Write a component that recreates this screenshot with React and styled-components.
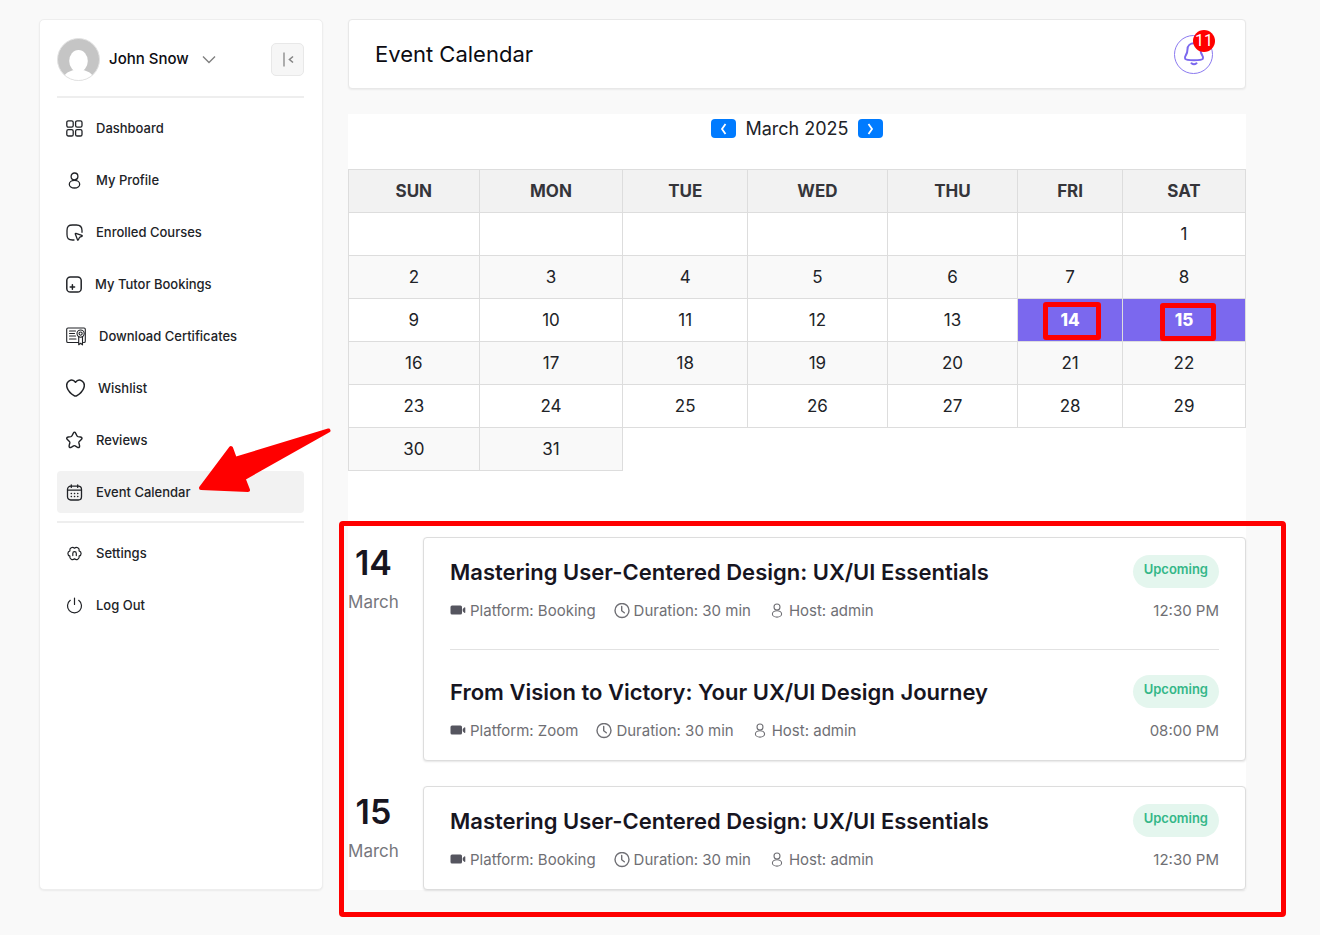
import React from "react";
import styled, { createGlobalStyle } from "styled-components";

const weekDays = ["SUN", "MON", "TUE", "WED", "THU", "FRI", "SAT"];

const weeks = [
  ["", "", "", "", "", "", 1],
  [2, 3, 4, 5, 6, 7, 8],
  [9, 10, 11, 12, 13, 14, 15],
  [16, 17, 18, 19, 20, 21, 22],
  [23, 24, 25, 26, 27, 28, 29],
  [30, 31],
];

const eventDays = [
  {
    day: 14,
    month: "March",
    events: [
      {
        title: "Mastering User-Centered Design: UX/UI Essentials",
        platform: "Booking",
        time: "12:30 PM",
      },
      {
        title: "From Vision to Victory: Your UX/UI Design Journey",
        platform: "Zoom",
        time: "08:00 PM",
      },
    ],
  },
  {
    day: 15,
    month: "March",
    events: [
      {
        title: "Mastering User-Centered Design: UX/UI Essentials",
        platform: "Booking",
        time: "12:30 PM",
      },
    ],
  },
];

const Icon = ({ w = 17, h = 17, box = "0 0 17 17", sw = 1.3, children }) => (
  <svg
    width={w}
    height={h}
    viewBox={box}
    fill="none"
    stroke="currentColor"
    strokeWidth={sw}
    strokeLinecap="round"
    strokeLinejoin="round"
    aria-hidden="true"
  >
    {children}
  </svg>
);

const DashboardIcon = () => (
  <Icon>
    <rect x="0.8" y="0.8" width="6.4" height="6.4" rx="1.6" />
    <rect x="9.6" y="0.8" width="6.4" height="6.4" rx="1.6" />
    <rect x="0.8" y="9.6" width="6.4" height="6.4" rx="1.6" />
    <rect x="9.6" y="9.6" width="6.4" height="6.4" rx="1.6" />
  </Icon>
);
const ProfileIcon = () => (
  <Icon>
    <circle cx="8.5" cy="4.4" r="3.4" />
    <ellipse cx="8.5" cy="12.2" rx="5.2" ry="3.8" />
  </Icon>
);
const CoursesIcon = () => (
  <Icon>
    <path d="M8 16H6.500C2.500 16 1 14.500 1 10.500v-4C1 2.500 2.500 1 6.500 1h4c4 0 5.500 1.500 5.500 5.500v1.800" />
    <path d="M9.900 9.300l6 2.100c.5.200.5.700 0 .9l-2 .9c-.3.100-.5.300-.6.600l-.9 2c-.2.500-.8.500-.9 0l-2.200-5.900c-.1-.4.200-.7.600-.6z" />
  </Icon>
);
const TutorIcon = () => (
  <Icon w={16} box="0 0 16 17" sw={1.5}>
    <rect x="0.8" y="1" width="14.4" height="15" rx="3.6" />
    <path d="M6.400 8.800v4.400M4.200 11h4.400" />
  </Icon>
);
const CertificateIcon = () => (
  <Icon w={20} h={19} box="0 0 20 19" sw={1.1}>
    <path d="M12.500 15.500H2A1.300 1.300 0 0 1 .7 14.200V2.300A1.300 1.300 0 0 1 2 1h16a1.300 1.300 0 0 1 1.300 1.300v11.900a1.300 1.300 0 0 1-1.300 1.300h-.5" />
    <path d="M3.500 4h6M3.500 6.500h5M3.500 9h6M3.500 12h6.500" />
    <circle cx="14.6" cy="6.6" r="3.6" />
    <circle cx="14.6" cy="6.6" r="1.6" />
    <path d="M12.700 9.800v8l1.900-1.500 1.900 1.500v-8" />
  </Icon>
);
const HeartIcon = () => (
  <Icon w={19} h={18} box="0 0 19 18" sw={1.5}>
    <path d="M9.500 3.300C7.700.9 5 .8 3.200 1.900.8 3.400.3 6.400 1.200 8.900c1.100 3.200 4.200 6 6.900 7.700.9.600 1.900.6 2.800 0 2.700-1.700 5.800-4.500 6.900-7.700.9-2.500.4-5.500-2-7C14 .8 11.300.9 9.500 3.300z" />
  </Icon>
);
const StarIcon = () => (
  <Icon h={18} box="0 0 17 18" sw={1.4}>
    <path d="M7.500 1.900c.5-1.100 1.500-1.100 2 0l1.400 2.900c.2.400.7.700 1.100.8l2.500.4c1.600.3 2 1.400.8 2.600l-2 2c-.3.300-.5.900-.4 1.400l.6 2.400c.4 1.900-.6 2.700-2.300 1.700l-2.100-1.300c-.4-.2-1.100-.2-1.500 0l-2.100 1.300c-1.700 1-2.700.2-2.300-1.700l.6-2.400c.1-.5-.1-1.100-.4-1.400l-2-2C.2 7.400.6 6.300 2.200 6l2.700-.4c.4-.1.900-.4 1.100-.8z" />
  </Icon>
);
const CalendarIcon = () => (
  <Icon>
    <rect x="1.500" y="2.200" width="14" height="13.800" rx="3.200" />
    <path d="M5.300.8v2.600M11.700.8v2.600M1.700 6.200h13.600" />
    <path
      d="M5.300 9.600h.1M8.500 9.600h.1M11.700 9.600h.1M5.300 12.400h.1M8.500 12.400h.1M11.700 12.400h.1"
      strokeWidth="1.5"
    />
  </Icon>
);
const SettingsIcon = () => (
  <Icon sw={1.2}>
    <path d="M8.500 3.200A2.750 2.750 0 0 1 13.100 5.850A2.750 2.750 0 0 1 13.100 11.150A2.750 2.750 0 0 1 8.500 13.800A2.750 2.750 0 0 1 3.900 11.150A2.750 2.750 0 0 1 3.900 5.850A2.750 2.750 0 0 1 8.500 3.200Z" />
    <path d="M6.800 10.600V8.400a1.750 1.750 0 0 1 3.500 0v2.200" />
  </Icon>
);
const PowerIcon = () => (
  <Icon sw={1.2}>
    <path d="M8.500 1v6.500M4.300 3.300a7 7 0 1 0 8.400 0" />
  </Icon>
);

const CameraIcon = () => (
  <svg width="16" height="11" viewBox="0 0 16 11" fill="#55555f" aria-hidden="true">
    <rect x="0.500" y="0.5" width="11.5" height="9" rx="1.5" />
    <path d="M12.700 4l1.600-1.500c.5-.4 1-.2 1 .4v4.400c0 .6-.5.800-1 .4l-1.600-1.500z" />
  </svg>
);
const ClockIcon = () => (
  <Icon w={16} h={16} box="0 0 16 16" sw={1.4}>
    <circle cx="8" cy="7.500" r="7" />
    <path d="M7.700 3.500v4.200l2.600 2" />
  </Icon>
);
const HostIcon = () => (
  <Icon w={16} h={16} box="0 0 16 16" sw={1.1}>
    <circle cx="8" cy="4" r="3" />
    <ellipse cx="8" cy="10.900" rx="4.600" ry="3.200" />
  </Icon>
);

const mainLinks = [
  { label: "Dashboard", icon: <DashboardIcon /> },
  { label: "My Profile", icon: <ProfileIcon /> },
  { label: "Enrolled Courses", icon: <CoursesIcon /> },
  { label: "My Tutor Bookings", icon: <TutorIcon /> },
  { label: "Download Certificates", icon: <CertificateIcon /> },
  { label: "Wishlist", icon: <HeartIcon /> },
  { label: "Reviews", icon: <StarIcon /> },
  { label: "Event Calendar", icon: <CalendarIcon />, active: true },
];

const accountLinks = [
  { label: "Settings", icon: <SettingsIcon /> },
  { label: "Log Out", icon: <PowerIcon /> },
];

// Red outline offsets inside the highlighted day cells
const marks = {
  14: { top: 3, shift: 2, width: 58 },
  15: { top: 4, shift: 4, width: 56 },
};

const App = () => {
  return (
    <>
      <GlobalStyle />
      <Page>
        <Sidebar>
          <UserRow>
            <UserButton type="button">
              <svg width="43" height="43" viewBox="0 0 43 43" aria-hidden="true">
                <clipPath id="avatar">
                  <circle cx="21.5" cy="21.5" r="21" />
                </clipPath>
                <g clipPath="url(#avatar)">
                  <rect width="43" height="43" fill="#c5c5c5" />
                  <ellipse cx="21.5" cy="23" rx="9.3" ry="11" fill="#fff" />
                  <ellipse cx="21.5" cy="41" rx="15" ry="9.5" fill="#fff" />
                </g>
                <circle cx="21.5" cy="21.5" r="21" fill="none" stroke="#e2e2e2" />
              </svg>
              <UserName>John Snow</UserName>
              <svg width="14" height="9" viewBox="0 0 14 9" fill="none" stroke="#808080" strokeWidth="1.4" aria-hidden="true">
                <path d="M1 1.500l6 6 6-6" />
              </svg>
            </UserButton>
            <CollapseButton type="button" aria-label="Collapse menu">
              <svg width="12" height="15" viewBox="0 0 12 15" fill="none" stroke="#858585" aria-hidden="true">
                <path d="M2 0.500v14" strokeWidth="1.3" />
                <path d="M11 4.500L7.500 7.500l3.500 3" strokeWidth="1.6" />
              </svg>
            </CollapseButton>
          </UserRow>
          <Nav>
            {mainLinks.map((link) => (
              <NavLink key={link.label} href="#" $active={link.active}>
                {link.icon}
                {link.label}
                {link.active && (
                  <Arrow width="136" height="68" viewBox="0 0 136 68" aria-hidden="true">
                    <path
                      d="M3 61L33 21L37 32L130.500 3.500L45.500 51.500L50 63Z"
                      fill="#f00"
                      stroke="#f00"
                      strokeWidth="4"
                      strokeLinejoin="round"
                    />
                  </Arrow>
                )}
              </NavLink>
            ))}
          </Nav>
          <Nav>
            {accountLinks.map((link) => (
              <NavLink key={link.label} href="#">
                {link.icon}
                {link.label}
              </NavLink>
            ))}
          </Nav>
        </Sidebar>

        <Main>
          <Header>
            <PageTitle>Event Calendar</PageTitle>
            <BellButton type="button" aria-label="Notifications">
              <svg width="22" height="24" viewBox="0 0 22 24" fill="none" stroke="#7b68ee" strokeWidth="2" strokeLinecap="round" strokeLinejoin="round" aria-hidden="true">
                <path d="M11 1.200C7.300 1.200 4.500 3.700 4.500 7.300c0 3-.4 3.900-1.600 5.800-1 1.700-1.400 2.800-.8 3.700.7 1.100 4.200 1.500 8.900 1.500s8.200-.4 8.900-1.500c.6-.9.200-2-.8-3.700-1.200-1.900-1.600-2.800-1.600-5.800 0-3.600-2.800-6.100-6.500-6.100z" />
                <path d="M8.500 21.300c1.500 1.200 3.500 1.200 5 0" />
              </svg>
              <Badge>11</Badge>
            </BellButton>
          </Header>

          <Content>
            <MonthNav>
              <MonthButton type="button" aria-label="Previous month">
                <svg width="7" height="12" viewBox="0 0 7 12" fill="none" stroke="#fff" strokeWidth="1.8" aria-hidden="true">
                  <path d="M5.500 1L2 6l3.500 5" />
                </svg>
              </MonthButton>
              <MonthName>March 2025</MonthName>
              <MonthButton type="button" aria-label="Next month">
                <svg width="7" height="12" viewBox="0 0 7 12" fill="none" stroke="#fff" strokeWidth="1.8" aria-hidden="true">
                  <path d="M1.500 1L5 6l-3.500 5" />
                </svg>
              </MonthButton>
            </MonthNav>

            <Calendar>
              <thead>
                <tr>
                  {weekDays.map((name) => (
                    <HeadCell key={name} scope="col">
                      {name}
                    </HeadCell>
                  ))}
                </tr>
              </thead>
              <tbody>
                {weeks.map((week, row) => (
                  <Week key={row}>
                    {week.map((day, col) => (
                      <DayCell key={col} $event={Boolean(marks[day])}>
                        {day}
                        {marks[day] && (
                          <DayMark
                            $top={marks[day].top}
                            $shift={marks[day].shift}
                            $width={marks[day].width}
                          />
                        )}
                      </DayCell>
                    ))}
                  </Week>
                ))}
              </tbody>
            </Calendar>

            <Events>
              {eventDays.map((group) => (
                <EventDay key={group.day}>
                  <EventDate>
                    <DayNumber>{group.day}</DayNumber>
                    <DayMonth>{group.month}</DayMonth>
                  </EventDate>
                  <EventCard>
                    {group.events.map((event) => (
                      <EventItem key={event.title}>
                        <EventRow>
                          <EventTitle>{event.title}</EventTitle>
                          <Status>Upcoming</Status>
                        </EventRow>
                        <EventRow>
                          <MetaList>
                            <Meta>
                              <CameraIcon />
                              Platform: {event.platform}
                            </Meta>
                            <Meta>
                              <ClockIcon />
                              Duration: 30 min
                            </Meta>
                            <Meta>
                              <HostIcon />
                              Host: admin
                            </Meta>
                          </MetaList>
                          <Time>{event.time}</Time>
                        </EventRow>
                      </EventItem>
                    ))}
                  </EventCard>
                </EventDay>
              ))}
              <EventsMark />
            </Events>
          </Content>
        </Main>
      </Page>
    </>
  );
};

const GlobalStyle = createGlobalStyle`
  * {
    box-sizing: border-box;
  }
  body {
    margin: 0;
    background-color: #f9f9f9;
    color: #212327;
    font-family: Inter, "Liberation Sans", sans-serif;
  }
  button {
    padding: 0;
    border: 0;
    background: none;
    color: inherit;
    font-family: inherit;
    cursor: pointer;
  }
  svg {
    flex-shrink: 0;
  }
`;

const Page = styled.div`
  display: flex;
  gap: 25px;
  padding: 19px 74px 44px 39px;
`;

const Sidebar = styled.aside`
  flex: 0 0 284px;
  padding: 18px 18px 18px 17px;
  border: 1px solid #eeeeee;
  border-radius: 5px;
  background-color: white;
  box-shadow: 0 1px 2px rgba(0, 0, 0, 0.06);
`;

const UserRow = styled.div`
  display: flex;
  align-items: center;
  justify-content: space-between;
  padding-bottom: 15px;
`;
const UserButton = styled.button`
  display: flex;
  align-items: center;
`;
const UserName = styled.span`
  margin: 0 13px 0 9px;
  padding-bottom: 2px;
  color: #0c0c12;
  font-size: 15px;
  font-weight: 500;
`;
const CollapseButton = styled.button`
  display: flex;
  align-items: center;
  justify-content: center;
  width: 33px;
  height: 33px;
  border: 1px solid #e8e8e8;
  border-radius: 5px;
  background-color: #f6f6f6;
`;

const Nav = styled.nav`
  display: flex;
  flex-direction: column;
  gap: 10px;
  padding: 9px 0 8px;
  border-top: 2px solid #eeeeee;
`;
const NavLink = styled.a`
  position: relative;
  display: flex;
  align-items: center;
  gap: 13px;
  height: 42px;
  padding: 0 9px;
  border-radius: 4px;
  background-color: ${(props) => (props.$active ? "#f2f2f2" : "transparent")};
  color: #212327;
  font-size: 13px;
  font-weight: 500;
  text-decoration: none;
`;
const Arrow = styled.svg`
  position: absolute;
  top: -44px;
  left: 141px;
`;

const Main = styled.main`
  flex: 1;
  min-width: 0;
`;

const Header = styled.header`
  display: flex;
  align-items: center;
  justify-content: space-between;
  height: 70px;
  padding: 0 32px 0 26px;
  border: 1px solid #e8e8e8;
  border-radius: 4px;
  background-color: white;
  box-shadow: 0 1px 2px rgba(0, 0, 0, 0.06);
`;
const PageTitle = styled.h1`
  margin: 0;
  color: #0c0c12;
  font-size: 22px;
  font-weight: 400;
`;
const BellButton = styled.button`
  position: relative;
  display: flex;
  align-items: center;
  justify-content: center;
  width: 39px;
  height: 39px;
  border: 1px solid #8b7af0;
  border-radius: 50%;
`;
const Badge = styled.span`
  position: absolute;
  top: -6px;
  right: -3px;
  width: 22px;
  height: 22px;
  border-radius: 50%;
  background-color: #f00;
  color: white;
  font-family: Roboto, sans-serif;
  font-size: 16px;
  font-weight: 400;
  line-height: 22px;
  text-align: center;
`;

const Content = styled.section`
  margin-top: 25px;
  background-color: white;
`;

const MonthNav = styled.div`
  display: flex;
  align-items: center;
  justify-content: center;
  gap: 9px;
  height: 55px;
  padding-bottom: 26px;
`;
const MonthButton = styled.button`
  display: flex;
  align-items: center;
  justify-content: center;
  width: 25px;
  height: 19px;
  border-radius: 4px;
  background-color: #007bff;
`;
const MonthName = styled.h2`
  margin: 0;
  font-size: 18px;
  font-weight: 400;
`;

const Calendar = styled.table`
  width: 100%;
  border-collapse: collapse;
`;
const HeadCell = styled.th`
  height: 43px;
  padding: 0 8px;
  border: 1px solid #dddddd;
  background-color: #f2f2f2;
  color: #35353a;
  font-size: 17px;
  font-weight: 700;
`;
const Week = styled.tr`
  &:nth-child(even) td {
    background-color: #f9f9f9;
  }
`;
const DayCell = styled.td`
  position: relative;
  height: 43px;
  padding: 0 8px;
  border: 1px solid #dddddd;
  background-color: ${(props) => (props.$event ? "#7b68ee" : "white")};
  color: ${(props) => (props.$event ? "white" : "#212327")};
  font-size: 17px;
  font-weight: ${(props) => (props.$event ? 800 : 400)};
  text-align: center;
`;
const DayMark = styled.span`
  position: absolute;
  top: ${(props) => props.$top}px;
  left: calc(50% - ${(props) => props.$width / 2 - props.$shift}px);
  width: ${(props) => props.$width}px;
  height: 38px;
  border: 5px solid #f00;
  border-radius: 3px;
`;

const Events = styled.div`
  position: relative;
  display: flex;
  flex-direction: column;
  gap: 25px;
  margin-top: 66px;
`;
const EventsMark = styled.div`
  position: absolute;
  top: -16px;
  right: -40px;
  bottom: -27px;
  left: -9px;
  border: 5px solid #f00;
  border-radius: 4px;
  pointer-events: none;
`;
const EventDay = styled.article`
  display: flex;
  gap: 24px;
`;
const EventDate = styled.div`
  flex: 0 0 51px;
  padding-top: 5px;
  text-align: center;
`;
const DayNumber = styled.div`
  color: #17151f;
  font-size: 34px;
  font-weight: 600;
  line-height: 42px;
`;
const DayMonth = styled.div`
  margin-top: 6px;
  color: #77777d;
  font-size: 17px;
  line-height: 24px;
`;
const EventCard = styled.div`
  flex: 1;
  padding: 0 26px;
  border: 1px solid #dddddd;
  border-radius: 4px;
  background-color: white;
  box-shadow: 0 1px 2px rgba(0, 0, 0, 0.1);
`;
const EventItem = styled.div`
  display: flex;
  flex-direction: column;
  gap: 10px;
  padding: 17px 0;
  & + & {
    margin-top: 9px;
    padding-top: 25px;
    border-top: 1px solid #e2e2e2;
  }
`;
const EventRow = styled.div`
  display: flex;
  align-items: center;
  justify-content: space-between;
`;
const EventTitle = styled.h3`
  margin: 0;
  color: #17151f;
  font-size: 22px;
  font-weight: 560;
`;
const Status = styled.span`
  height: 33px;
  padding: 4px 11px 0;
  border-radius: 17px;
  background-color: #e4f6ee;
  color: #34b788;
  font-size: 13px;
  font-weight: 600;
  line-height: 20px;
`;
const MetaList = styled.div`
  display: flex;
  gap: 18px;
`;
const Meta = styled.span`
  display: flex;
  align-items: center;
  gap: 4px;
  color: #6f6f74;
  font-size: 15px;
  line-height: 25px;
`;
const Time = styled.time`
  color: #6f6f74;
  font-size: 15px;
  line-height: 25px;
`;

export default App;
